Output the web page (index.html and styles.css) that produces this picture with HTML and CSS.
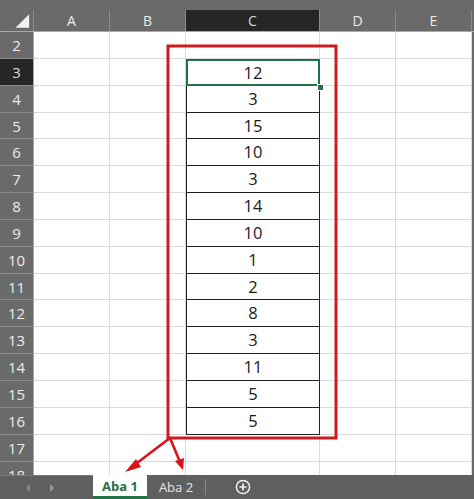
FILE: index.html
```html
<!DOCTYPE html>
<html>
<head>
<meta charset="utf-8">
<link rel="stylesheet" href="styles.css">
</head>
<body>
<div class="app">
  <div class="topband"></div>
  <div class="colhead">
    <div class="corner"><svg width="34" height="22" viewBox="0 0 34 22"><polygon points="16,18 30,18 30,4" fill="#f2f2f2"/></svg></div>
    <div class="ch">A</div>
    <div class="ch">B</div>
    <div class="ch wide sel">C</div>
    <div class="ch">D</div>
    <div class="ch">E</div>
  </div>
  <div class="grid">
    <div class="row"><div class="rh">2</div><div class="c"></div><div class="c"></div><div class="c wide"></div><div class="c"></div><div class="c"></div></div>
    <div class="row"><div class="rh sel">3</div><div class="c"></div><div class="c"></div><div class="c wide d active">12</div><div class="c"></div><div class="c"></div></div>
    <div class="row"><div class="rh">4</div><div class="c"></div><div class="c"></div><div class="c wide d">3</div><div class="c"></div><div class="c"></div></div>
    <div class="row"><div class="rh">5</div><div class="c"></div><div class="c"></div><div class="c wide d">15</div><div class="c"></div><div class="c"></div></div>
    <div class="row"><div class="rh">6</div><div class="c"></div><div class="c"></div><div class="c wide d">10</div><div class="c"></div><div class="c"></div></div>
    <div class="row"><div class="rh">7</div><div class="c"></div><div class="c"></div><div class="c wide d">3</div><div class="c"></div><div class="c"></div></div>
    <div class="row"><div class="rh">8</div><div class="c"></div><div class="c"></div><div class="c wide d">14</div><div class="c"></div><div class="c"></div></div>
    <div class="row"><div class="rh">9</div><div class="c"></div><div class="c"></div><div class="c wide d">10</div><div class="c"></div><div class="c"></div></div>
    <div class="row"><div class="rh">10</div><div class="c"></div><div class="c"></div><div class="c wide d">1</div><div class="c"></div><div class="c"></div></div>
    <div class="row"><div class="rh">11</div><div class="c"></div><div class="c"></div><div class="c wide d">2</div><div class="c"></div><div class="c"></div></div>
    <div class="row"><div class="rh">12</div><div class="c"></div><div class="c"></div><div class="c wide d">8</div><div class="c"></div><div class="c"></div></div>
    <div class="row"><div class="rh">13</div><div class="c"></div><div class="c"></div><div class="c wide d">3</div><div class="c"></div><div class="c"></div></div>
    <div class="row"><div class="rh">14</div><div class="c"></div><div class="c"></div><div class="c wide d">11</div><div class="c"></div><div class="c"></div></div>
    <div class="row"><div class="rh">15</div><div class="c"></div><div class="c"></div><div class="c wide d">5</div><div class="c"></div><div class="c"></div></div>
    <div class="row"><div class="rh">16</div><div class="c"></div><div class="c"></div><div class="c wide d">5</div><div class="c"></div><div class="c"></div></div>
    <div class="row"><div class="rh">17</div><div class="c"></div><div class="c"></div><div class="c wide"></div><div class="c"></div><div class="c"></div></div>
    <div class="row"><div class="rh">18</div><div class="c"></div><div class="c"></div><div class="c wide"></div><div class="c"></div><div class="c"></div></div>
  </div>
  <div class="tabbar">
    <div class="nav">
      <svg width="8" height="10" viewBox="0 0 8 10"><polygon points="6,1 2,5 6,9" fill="#8a8a8a"/></svg>
      <svg width="8" height="10" viewBox="0 0 8 10"><polygon points="2,1 6,5 2,9" fill="#9a9a9a"/></svg>
    </div>
    <div class="tab active">Aba 1</div>
    <div class="tab">Aba 2</div>
    <div class="tabsep"></div>
    <div class="add"><svg width="16" height="16" viewBox="0 0 16 16"><circle cx="8" cy="8" r="6.6" fill="none" stroke="#f0f0f0" stroke-width="1.5"/><path d="M8 4.5v7M4.5 8h7" stroke="#f0f0f0" stroke-width="1.7"/></svg></div>
  </div>
  <div class="handle"></div>
  <svg class="annot" width="474" height="499" viewBox="0 0 474 499">
    <rect x="168" y="46" width="168" height="392" fill="none" stroke="#cc1c22" stroke-width="3"/>
    <g stroke="#d8141b" stroke-width="2.6" fill="none" stroke-linecap="round">
      <line x1="170" y1="438" x2="133" y2="466"/>
      <line x1="170" y1="438" x2="180" y2="462"/>
    </g>
    <polygon points="125,472 136,459 141,467" fill="#d8141b"/>
    <polygon points="183,470 175,461 184,458" fill="#d8141b"/>
  </svg>
</div>
</body>
</html>
```
FILE: styles.css
```css
html, body {
  margin: 0;
  padding: 0;
  background: #ffffff;
}
.app {
  position: relative;
  width: 474px;
  height: 499px;
  overflow: hidden;
  background: #6a6a6a;
  font-family: "Open Sans", "Liberation Sans", sans-serif;
  display: flex;
  flex-direction: column;
}
.topband {
  height: 10px;
  flex: none;
  background: #6a6a6a;
}
.colhead {
  display: flex;
  flex: none;
  height: 22px;
  border-bottom: 1px solid #a8a8a8;
  box-sizing: border-box;
}
.corner {
  width: 34px;
  flex: none;
  border-right: 1px solid #8c8c8c;
  box-sizing: border-box;
  display: flex;
}
.ch {
  width: 76px;
  flex: none;
  box-sizing: border-box;
  border-right: 1px solid #8c8c8c;
  color: #ececec;
  font-size: 14px;
  line-height: 21px;
  text-align: center;
  background: #6a6a6a;
}
.ch.wide {
  width: 134px;
}
.ch.sel {
  background: #262626;
  color: #d6d6d6;
}
.grid {
  display: flex;
  flex-direction: column;
  flex: none;
  height: 443px;
  overflow: hidden;
}
.row {
  display: flex;
  height: 26.85px;
  flex: none;
}
.rh {
  width: 34px;
  flex: none;
  box-sizing: border-box;
  background: #6a6a6a;
  color: #ececec;
  font-size: 15px;
  line-height: 26px;
  text-align: center;
  border-bottom: 1px solid #8c8c8c;
  border-right: 1px solid #a8a8a8;
}
.rh.sel {
  background: #262626;
  color: #d6d6d6;
}
.c {
  width: 76px;
  flex: none;
  box-sizing: border-box;
  background: #ffffff;
  border-right: 1px solid #dadada;
  border-bottom: 1px solid #dadada;
  color: #1a1a1a;
  font-size: 16.5px;
  line-height: 26px;
  text-align: center;
}
.c.wide {
  width: 134px;
}
.c.d {
  border: 1px solid #202020;
  border-top: none;
  line-height: 26px;
}
.c.d.active {
  border: 2px solid #217346;
  line-height: 23px;
}
.tabbar {
  position: relative;
  height: 24px;
  flex: none;
  display: flex;
  align-items: stretch;
  background: #5f5f5f;
  margin-top: auto;
}
.nav {
  width: 93px;
  display: flex;
  align-items: center;
  gap: 16px;
  padding-left: 24px;
  box-sizing: border-box;
  border-top: 1px solid #7a7a7a;
}
.tab {
  width: 54px;
  text-align: center;
  font-size: 13px;
  line-height: 24px;
  color: #e6e6e6;
}
.tab.active {
  background: #ffffff;
  color: #217346;
  font-weight: 700;
  box-sizing: border-box;
  border-bottom: 3px solid #217346;
  line-height: 22px;
}
.tab + .tab {
  margin-left: 2px;
}
.tabsep {
  width: 1px;
  background: #8a8a8a;
  margin: 4px 0 4px 2px;
}
.add {
  display: flex;
  align-items: center;
  margin-left: 29px;
}
.handle {
  position: absolute;
  left: 317px;
  top: 83.5px;
  width: 5px;
  height: 5px;
  background: #217346;
  border: 1px solid #ffffff;
}
.annot {
  position: absolute;
  left: 0;
  top: 0;
  pointer-events: none;
}
```
